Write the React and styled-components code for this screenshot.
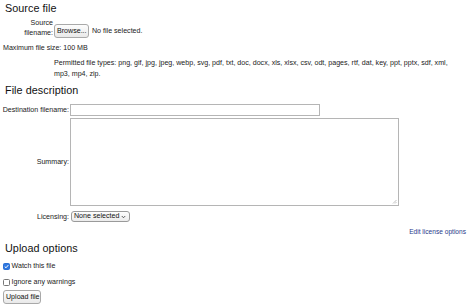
import React from "react";
import styled, { createGlobalStyle } from "styled-components";

const Global = createGlobalStyle`
  html, body { margin: 0; padding: 0; background: #fff; }
  body { font-family: "Liberation Sans", Arial, sans-serif; }
`;

const Page = styled.div`
  width: 474px;
  height: 307px;
  overflow: hidden;
  font-size: 7.1px;
  color: #222;
  display: flex;
  flex-direction: column;
`;

const Heading = styled.h2`
  margin: ${(p) => p.$top || 0}px 0 0 0;
  padding-left: 5px;
  font-size: 10.8px;
  line-height: 13px;
  font-weight: 400;
  color: #111;
  letter-spacing: 0.05px;
`;

const SourceRow = styled.div`
  margin-top: 3px;
  display: grid;
  grid-template-columns: 54px auto auto;
  justify-content: start;
  align-items: start;
`;

const TwoLineLabel = styled.div`
  text-align: right;
  line-height: 10px;
  padding-right: 1px;
`;

const Button = styled.button`
  font-family: inherit;
  font-size: 7.1px;
  color: #111;
  height: 14px;
  padding: 0 2px;
  margin: ${(p) => p.$mt || 0}px 0 0 0;
  border: 1px solid #a9a9a9;
  border-radius: 3px;
  background: linear-gradient(#fdfdfd, #e9e9e9);
  line-height: 12px;
  align-self: start;
  box-sizing: border-box;
  width: ${(p) => p.$w}px;
  white-space: nowrap;
`;

const Inline = styled.span`
  margin-top: 6px;
  margin-left: 3px;
  line-height: 14px;
  white-space: nowrap;
`;

const Line = styled.div`
  margin-top: ${(p) => p.$mt || 0}px;
  padding-left: ${(p) => p.$pl || 0}px;
  line-height: ${(p) => p.$lh || 10}px;
  white-space: nowrap;
`;

const FormGrid = styled.div`
  margin-top: 7px;
  display: grid;
  grid-template-columns: 70px 1fr;
  row-gap: ${(p) => p.$gap || 0}px;
  align-items: center;
`;

const Label = styled.label`
  text-align: right;
  padding-right: 1px;
  white-space: nowrap;
  line-height: 10px;
`;

const TextInput = styled.div`
  width: 250px;
  height: 12px;
  box-sizing: border-box;
  border: 1px solid #b5b5b5;
  background: #fff;
`;

const TextArea = styled.div`
  position: relative;
  width: 329px;
  height: 88px;
  box-sizing: border-box;
  border: 1px solid #b5b5b5;
  background: #fff;
`;

const Grip = styled.svg`
  position: absolute;
  right: 1px;
  bottom: 1px;
`;

const LicenseRow = styled.div`
  margin-top: 5px;
  display: grid;
  grid-template-columns: 70px auto;
  justify-content: start;
  align-items: center;
`;

const Select = styled.div`
  margin-left: 1px;
  width: 59px;
  height: 11px;
  box-sizing: border-box;
  border: 1px solid #9a9a9a;
  border-radius: 3px;
  background: linear-gradient(#fdfdfd, #ececec);
  display: flex;
  align-items: center;
  justify-content: space-between;
  padding: 0 3px 0 2px;
  color: #111;
  line-height: 9px;
  white-space: nowrap;
`;

const Chevron = styled.svg`
  display: block;
`;

const LinkRow = styled.div`
  margin-top: 5px;
  text-align: right;
  padding-right: 8px;
  line-height: 10px;
`;

const Link = styled.a`
  color: #1f3a8a;
  text-decoration: none;
  font-size: 6.6px;
`;

const CheckRow = styled.label`
  margin-top: 6px;
  padding-left: 3px;
  display: flex;
  align-items: center;
  gap: 1.5px;
  line-height: 10px;
  white-space: nowrap;
`;

const Box = styled.span`
  width: 7px;
  height: 7px;
  box-sizing: border-box;
  border-radius: 1.5px;
  border: 1px solid ${(p) => (p.$checked ? "#2a6fd6" : "#777")};
  background: ${(p) => (p.$checked ? "#2f78e0" : "#fff")};
  display: flex;
  align-items: center;
  justify-content: center;
`;

const ButtonRow = styled.div`
  margin-top: 3px;
  padding-left: 3px;
  display: flex;
`;

function Check({ checked }) {
  return (
    <Box $checked={checked}>
      {checked && (
        <svg width="5" height="5" viewBox="0 0 10 10">
          <path d="M1.5 5.2 L4 7.6 L8.6 2.2" fill="none" stroke="#fff" strokeWidth="2" />
        </svg>
      )}
    </Box>
  );
}

export default function App() {
  return (
    <>
      <Global />
      <Page>
        <Heading $top={2}>Source file</Heading>
        <SourceRow>
          <TwoLineLabel>
            Source
            <br />
            filename:
          </TwoLineLabel>
          <Button $mt={6} $w={35}>Browse...</Button>
          <Inline>No file selected.</Inline>
        </SourceRow>
        <Line $mt={5} $pl={3}>Maximum file size: 100 MB</Line>
        <Line $mt={5} $pl={54} $lh={11}>
          Permitted file types: png, gif, jpg, jpeg, webp, svg, pdf, txt, doc, docx, xls, xlsx, csv, odt, pages, rtf, dat, key, ppt, pptx, sdf, xml,
          <br />
          mp3, mp4, zip.
        </Line>

        <Heading $top={4}>File description</Heading>
        <FormGrid $gap={2}>
          <Label>Destination filename:</Label>
          <TextInput />
          <Label>Summary:</Label>
          <TextArea>
            <Grip width="5" height="5" viewBox="0 0 10 10">
              <path d="M9 2 L2 9 M9 6 L6 9" stroke="#999" strokeWidth="1.2" />
            </Grip>
          </TextArea>
        </FormGrid>
        <LicenseRow>
          <Label>Licensing:</Label>
          <Select>
            <span>None selected</span>
            <Chevron width="5" height="4" viewBox="0 0 10 8">
              <path d="M1.5 2 L5 5.5 L8.5 2" fill="none" stroke="#333" strokeWidth="1.6" />
            </Chevron>
          </Select>
        </LicenseRow>
        <LinkRow>
          <Link href="#">Edit license options</Link>
        </LinkRow>

        <Heading $top={5}>Upload options</Heading>
        <CheckRow>
          <Check checked />
          Watch this file
        </CheckRow>
        <CheckRow>
          <Check />
          Ignore any warnings
        </CheckRow>
        <ButtonRow>
          <Button $w={38}>Upload file</Button>
        </ButtonRow>
      </Page>
    </>
  );
}
